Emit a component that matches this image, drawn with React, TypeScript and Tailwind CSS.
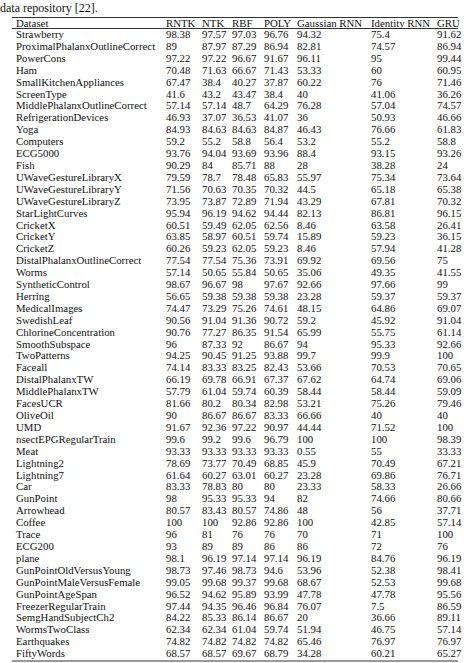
const header = ['Dataset', 'RNTK', 'NTK', 'RBF', 'POLY', 'Gaussian RNN', 'Identity RNN', 'GRU'];

const rows: string[][] = [
  ['Strawberry', '98.38', '97.57', '97.03', '96.76', '94.32', '75.4', '91.62'],
  ['ProximalPhalanxOutlineCorrect', '89', '87.97', '87.29', '86.94', '82.81', '74.57', '86.94'],
  ['PowerCons', '97.22', '97.22', '96.67', '91.67', '96.11', '95', '99.44'],
  ['Ham', '70.48', '71.63', '66.67', '71.43', '53.33', '60', '60.95'],
  ['SmallKitchenAppliances', '67.47', '38.4', '40.27', '37.87', '60.22', '76', '71.46'],
  ['ScreenType', '41.6', '43.2', '43.47', '38.4', '40', '41.06', '36.26'],
  ['MiddlePhalanxOutlineCorrect', '57.14', '57.14', '48.7', '64.29', '76.28', '57.04', '74.57'],
  ['RefrigerationDevices', '46.93', '37.07', '36.53', '41.07', '36', '50.93', '46.66'],
  ['Yoga', '84.93', '84.63', '84.63', '84.87', '46.43', '76.66', '61.83'],
  ['Computers', '59.2', '55.2', '58.8', '56.4', '53.2', '55.2', '58.8'],
  ['ECG5000', '93.76', '94.04', '93.69', '93.96', '88.4', '93.15', '93.26'],
  ['Fish', '90.29', '84', '85.71', '88', '28', '38.28', '24'],
  ['UWaveGestureLibraryX', '79.59', '78.7', '78.48', '65.83', '55.97', '75.34', '73.64'],
  ['UWaveGestureLibraryY', '71.56', '70.63', '70.35', '70.32', '44.5', '65.18', '65.38'],
  ['UWaveGestureLibraryZ', '73.95', '73.87', '72.89', '71.94', '43.29', '67.81', '70.32'],
  ['StarLightCurves', '95.94', '96.19', '94.62', '94.44', '82.13', '86.81', '96.15'],
  ['CricketX', '60.51', '59.49', '62.05', '62.56', '8.46', '63.58', '26.41'],
  ['CricketY', '63.85', '58.97', '60.51', '59.74', '15.89', '59.23', '36.15'],
  ['CricketZ', '60.26', '59.23', '62.05', '59.23', '8.46', '57.94', '41.28'],
  ['DistalPhalanxOutlineCorrect', '77.54', '77.54', '75.36', '73.91', '69.92', '69.56', '75'],
  ['Worms', '57.14', '50.65', '55.84', '50.65', '35.06', '49.35', '41.55'],
  ['SyntheticControl', '98.67', '96.67', '98', '97.67', '92.66', '97.66', '99'],
  ['Herring', '56.65', '59.38', '59.38', '59.38', '23.28', '59.37', '59.37'],
  ['MedicalImages', '74.47', '73.29', '75.26', '74.61', '48.15', '64.86', '69.07'],
  ['SwedishLeaf', '90.56', '91.04', '91.36', '90.72', '59.2', '45.92', '91.04'],
  ['ChlorineConcentration', '90.76', '77.27', '86.35', '91.54', '65.99', '55.75', '61.14'],
  ['SmoothSubspace', '96', '87.33', '92', '86.67', '94', '95.33', '92.66'],
  ['TwoPatterns', '94.25', '90.45', '91.25', '93.88', '99.7', '99.9', '100'],
  ['Faceall', '74.14', '83.33', '83.25', '82.43', '53.66', '70.53', '70.65'],
  ['DistalPhalanxTW', '66.19', '69.78', '66.91', '67.37', '67.62', '64.74', '69.06'],
  ['MiddlePhalanxTW', '57.79', '61.04', '59.74', '60.39', '58.44', '58.44', '59.09'],
  ['FacesUCR', '81.66', '80.2', '80.34', '82.98', '53.21', '75.26', '79.46'],
  ['OliveOil', '90', '86.67', '86.67', '83.33', '66.66', '40', '40'],
  ['UMD', '91.67', '92.36', '97.22', '90.97', '44.44', '71.52', '100'],
  ['nsectEPGRegularTrain', '99.6', '99.2', '99.6', '96.79', '100', '100', '98.39'],
  ['Meat', '93.33', '93.33', '93.33', '93.33', '0.55', '55', '33.33'],
  ['Lightning2', '78.69', '73.77', '70.49', '68.85', '45.9', '70.49', '67.21'],
  ['Lightning7', '61.64', '60.27', '63.01', '60.27', '23.28', '69.86', '76.71'],
  ['Car', '83.33', '78.83', '80', '80', '23.33', '58.33', '26.66'],
  ['GunPoint', '98', '95.33', '95.33', '94', '82', '74.66', '80.66'],
  ['Arrowhead', '80.57', '83.43', '80.57', '74.86', '48', '56', '37.71'],
  ['Coffee', '100', '100', '92.86', '92.86', '100', '42.85', '57.14'],
  ['Trace', '96', '81', '76', '76', '70', '71', '100'],
  ['ECG200', '93', '89', '89', '86', '86', '72', '76'],
  ['plane', '98.1', '96.19', '97.14', '97.14', '96.19', '84.76', '96.19'],
  ['GunPointOldVersusYoung', '98.73', '97.46', '98.73', '94.6', '53.96', '52.38', '98.41'],
  ['GunPointMaleVersusFemale', '99.05', '99.68', '99.37', '99.68', '68.67', '52.53', '99.68'],
  ['GunPointAgeSpan', '96.52', '94.62', '95.89', '93.99', '47.78', '47.78', '95.56'],
  ['FreezerRegularTrain', '97.44', '94.35', '96.46', '96.84', '76.07', '7.5', '86.59'],
  ['SemgHandSubjectCh2', '84.22', '85.33', '86.14', '86.67', '20', '36.66', '89.11'],
  ['WormsTwoClass', '62.34', '62.34', '61.04', '59.74', '51.94', '46.75', '57.14'],
  ['Earthquakes', '74.82', '74.82', '74.82', '74.82', '65.46', '76.97', '76.97'],
  ['FiftyWords', '68.57', '68.57', '69.67', '68.79', '34.28', '60.21', '65.27'],
];

const cols = 'grid grid-cols-[150px_36px_30px_32px_33px_74px_66px_25px]';

export default function App() {
  return (
    <div className="w-[474px] h-[663px] overflow-hidden bg-white text-[#111] font-['Liberation_Serif',serif]">
      {/* caption, cut off at the top of the page */}
      <div className="h-[17px] text-[12px] leading-[16px]">data repository [22].</div>

      <div className="ml-[12px] w-[446px] text-[10.8px]">
        <div className={`${cols} border-t border-b border-[#333] h-[12px] leading-[10px] pl-[4px]`}>
          {header.map((h) => (
            <div key={h} className="whitespace-nowrap">{h}</div>
          ))}
        </div>

        <div className="pl-[4px]">
          {rows.map((r) => (
            <div key={r[0]} className={`${cols} h-[11.92px] leading-[11.92px]`}>
              {r.map((c, i) => (
                <div key={i} className="whitespace-nowrap">{c}</div>
              ))}
            </div>
          ))}
        </div>

        <div className="h-[2px] bg-[#999]" />
      </div>
    </div>
  );
}
